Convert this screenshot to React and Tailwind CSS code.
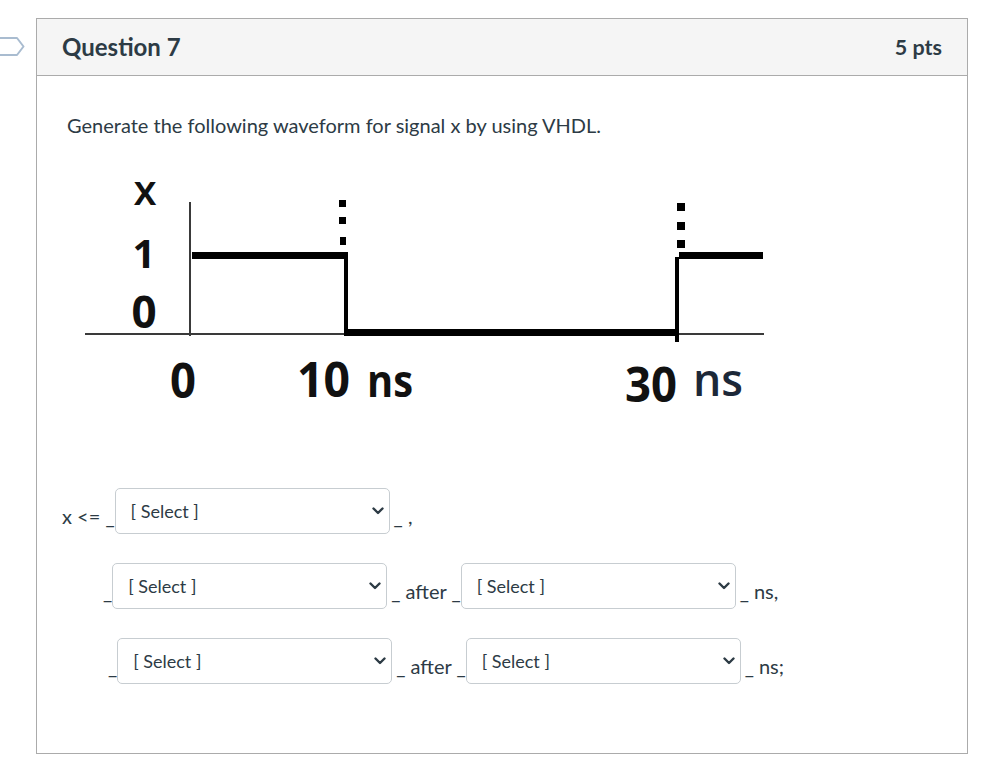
import React from 'react';

const ink = 'text-[#2d3b45]';

function Chevron() {
  return (
    <svg width="12" height="8" viewBox="0 0 12 8" className="shrink-0">
      <path d="M1.5 1.5 L6 6 L10.5 1.5" fill="none" stroke="#2d3b45" strokeWidth="2.4" strokeLinecap="round" strokeLinejoin="round" />
    </svg>
  );
}

function FakeSelect() {
  return (
    <div className={`flex h-[46px] w-[275px] items-center justify-between rounded-[5px] border border-[#c7cdd1] bg-white pl-[15px] pr-[5px] text-[18px] ${ink}`}>
      <span>[ Select ]</span>
      <Chevron />
    </div>
  );
}

function Waveform() {
  const lbl = { fontFamily: '"Open Sans", sans-serif', fontWeight: 700 };
  return (
    <svg width="700" height="265" viewBox="0 0 700 265" className="block">
      <g transform="translate(-80,-150)">
        {/* axes */}
        <line x1="190" y1="202" x2="190" y2="336" stroke="#3a3a3a" strokeWidth="2" />
        <line x1="85" y1="334" x2="764" y2="334" stroke="#3a3a3a" strokeWidth="2" />
        {/* signal */}
        <rect x="192" y="252" width="155" height="7" fill="#000" />
        <rect x="344" y="252" width="4" height="84" fill="#000" />
        <rect x="346" y="329" width="332" height="7" fill="#000" />
        <rect x="675" y="257" width="4" height="85" fill="#000" />
        <rect x="679" y="252" width="84" height="7" fill="#000" />
        {/* dots */}
        <rect x="339" y="200" width="7" height="7" fill="#000" />
        <rect x="339" y="217" width="7" height="7" fill="#000" />
        <rect x="340" y="237" width="6" height="8" fill="#000" />
        <rect x="677" y="203" width="8" height="8" fill="#000" />
        <rect x="677" y="222" width="8" height="8" fill="#000" />
        <rect x="677" y="240" width="8" height="8" fill="#000" />
        {/* labels */}
        <text x="145" y="205" fontSize="42" textAnchor="middle" fill="#111" style={{ fontFamily: '"Open Sans", sans-serif', fontWeight: 600 }}>x</text>
        <text x="144" y="268" fontSize="40" textAnchor="middle" fill="#111" style={lbl}>1</text>
        <text x="144" y="328" fontSize="44" textAnchor="middle" fill="#111" style={lbl}>0</text>
        <text x="170" y="398" fontSize="48" textLength="26" lengthAdjust="spacingAndGlyphs" fill="#111" style={lbl}>0</text>
        <text x="297" y="397" fontSize="48" textLength="53" lengthAdjust="spacingAndGlyphs" fill="#111" style={lbl}>10</text>
        <text x="367" y="397" fontSize="44" textLength="46" lengthAdjust="spacingAndGlyphs" fill="#111" style={lbl}>ns</text>
        <text x="625" y="402" fontSize="48" textLength="52" lengthAdjust="spacingAndGlyphs" fill="#111" style={lbl}>30</text>
        <text x="693" y="396" fontSize="46" textLength="50" lengthAdjust="spacingAndGlyphs" fill="#1c2838" style={{ fontFamily: '"Open Sans", sans-serif', fontWeight: 600 }}>ns</text>
      </g>
    </svg>
  );
}

export default function App() {
  return (
    <div className="min-h-[774px] w-[1001px] bg-white pt-[18px]" style={{ fontFamily: 'Lato, "Open Sans", sans-serif' }}>
      <div className="flex items-start">
        {/* flag marker */}
        <svg width="25" height="19" viewBox="0 0 25 19" className="mt-[19px] shrink-0">
          <path d="M-2 1 H17 L23.5 9.5 L17 18 H-2" fill="none" stroke="#a9bcd0" strokeWidth="2" strokeLinejoin="round" />
        </svg>

        <div className="ml-[11px] w-[932px] border border-[#ababab]">
          {/* header */}
          <div className={`flex h-[57px] items-center justify-between border-b border-[#ababab] bg-[#f5f5f5] px-[25px] ${ink}`}>
            <h2 className="text-[24px] font-bold">Question 7</h2>
            <span className="text-[21.5px] font-bold">5 pts</span>
          </div>

          {/* body */}
          <div className={`pl-[25px] pb-[69px] pt-[36px] ${ink}`}>
            <p className="pl-[5px] text-[20px] leading-[27px]">Generate the following waveform for signal x by using VHDL.</p>

            <div className="ml-[18px] mt-[11px]">
              <Waveform />
            </div>

            <div className="mt-[73px] flex flex-col gap-[29px] text-[20px] leading-[27px]">
              <div className="flex items-center">
                <span className="pt-[10px]">x &lt;= _</span>
                <FakeSelect />
                <span className="ml-[4px] pt-[10px]">_ ,</span>
              </div>
              <div className="ml-[41px] flex items-center">
                <span className="pt-[10px]">_</span>
                <FakeSelect />
                <span className="ml-[4px] pt-[10px]">_ after _</span>
                <FakeSelect />
                <span className="ml-[4px] pt-[10px]">_ ns,</span>
              </div>
              <div className="ml-[46px] flex items-center">
                <span className="pt-[10px]">_</span>
                <FakeSelect />
                <span className="ml-[4px] pt-[10px]">_ after _</span>
                <FakeSelect />
                <span className="ml-[4px] pt-[10px]">_ ns;</span>
              </div>
            </div>
          </div>
        </div>
      </div>
    </div>
  );
}
